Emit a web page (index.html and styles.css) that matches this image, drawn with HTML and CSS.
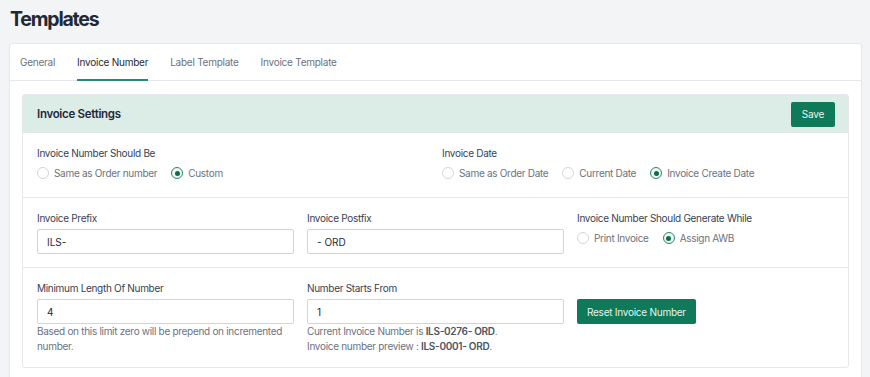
FILE: index.html
```html
<!DOCTYPE html>
<html>
<head>
<meta charset="utf-8">
<link rel="stylesheet" href="styles.css">
</head>
<body>
<h1 class="page-title">Templates</h1>
<div class="outer-card">
  <nav class="tabs">
    <span class="tab">General</span>
    <span class="tab active">Invoice Number</span>
    <span class="tab">Label Template</span>
    <span class="tab">Invoice Template</span>
  </nav>
  <div class="tab-body">
    <div class="settings-card">
      <div class="settings-header">
        <span class="settings-title">Invoice Settings</span>
        <button class="btn btn-save">Save</button>
      </div>
      <div class="row two">
        <div class="field">
          <div class="label">Invoice Number Should Be</div>
          <div class="radios">
            <span class="radio"><span class="dot"></span>Same as Order number</span>
            <span class="radio checked"><span class="dot"></span>Custom</span>
          </div>
        </div>
        <div class="field">
          <div class="label">Invoice Date</div>
          <div class="radios">
            <span class="radio"><span class="dot"></span>Same as Order Date</span>
            <span class="radio"><span class="dot"></span>Current Date</span>
            <span class="radio checked"><span class="dot"></span>Invoice Create Date</span>
          </div>
        </div>
      </div>
      <div class="row three">
        <div class="field">
          <div class="label">Invoice Prefix</div>
          <div class="input">ILS-</div>
        </div>
        <div class="field">
          <div class="label">Invoice Postfix</div>
          <div class="input">- ORD</div>
        </div>
        <div class="field">
          <div class="label">Invoice Number Should Generate While</div>
          <div class="radios">
            <span class="radio"><span class="dot"></span>Print Invoice</span>
            <span class="radio checked"><span class="dot"></span>Assign AWB</span>
          </div>
        </div>
      </div>
      <div class="row three last">
        <div class="field">
          <div class="label">Minimum Length Of Number</div>
          <div class="input">4</div>
          <div class="help">Based on this limit zero will be prepend on incremented number.</div>
        </div>
        <div class="field">
          <div class="label">Number Starts From</div>
          <div class="input">1</div>
          <div class="help">Current Invoice Number is <b>ILS-0276- ORD</b>.<br>Invoice number preview : <b>ILS-0001- ORD</b>.</div>
        </div>
        <div class="field">
          <div class="label">&nbsp;</div>
          <div class="btn-wrap"><button class="btn btn-reset">Reset Invoice Number</button></div>
        </div>
      </div>
    </div>
  </div>
</div>
</body>
</html>
```
FILE: styles.css
```css
* { box-sizing: border-box; }
html, body { margin: 0; padding: 0; }
body {
  background: #f3f4f6;
  font-family: Inter, "Noto Sans", sans-serif;
  color: #374151;
  padding: 0 8px 0 9px;
  overflow: hidden;
  height: 377px;
}
.page-title {
  margin: 0;
  padding: 7px 0 0 1px;
  height: 43px;
  font-size: 19.5px;
  font-weight: 700;
  color: #1f2937;
  letter-spacing: -1.2px;
}
.outer-card {
  background: #fff;
  border: 1px solid #e5e7eb;
  border-radius: 3px;
  height: 400px;
}
.tabs {
  display: flex;
  gap: 22px;
  padding: 0 10px;
  height: 37px;
  border-bottom: 1px solid #e5e7eb;
}
.tab {
  display: flex;
  align-items: center;
  font-size: 10px;
  letter-spacing: -0.25px;
  color: #6b7280;
  border-bottom: 2px solid transparent;
  padding-top: 1px;
  margin-bottom: -1px;
}
.tab.active {
  color: #1f2937;
  border-bottom-color: #27896d;
}
.tab-body {
  padding: 13px 12px 0 12px;
}
.settings-card {
  border: 1px solid #e5e7eb;
  border-radius: 3px;
  background: #fff;
}
.settings-header {
  display: flex;
  justify-content: space-between;
  align-items: center;
  background: #dcede8;
  height: 38px;
  padding: 0 13px 0 14px;
}
.settings-title {
  font-size: 11.5px;
  font-weight: 600;
  letter-spacing: -0.3px;
  color: #1f2937;
}
.btn {
  font-family: inherit;
  background: #0e7a5a;
  color: #e6f4ef;
  border: none;
  border-radius: 2px;
  font-size: 10px;
  letter-spacing: -0.25px;
  height: 25px;
  padding: 0 10px;
}
.btn-save { padding: 0 11px; }
.btn-wrap { margin-top: 3px; }
.row {
  display: grid;
  gap: 13px;
  padding: 13px 14px 0 14px;
  border-bottom: 1px solid #e5e7eb;
}
.row.two { grid-template-columns: 1fr 1fr; height: 65px; }
.row.three { grid-template-columns: 1fr 1fr 1fr; height: 70px; }
.row.last { border-bottom: none; height: 99px; }
.label {
  font-size: 10px;
  letter-spacing: -0.3px;
  color: #374151;
  height: 15px;
  line-height: 15px;
}
.radios {
  display: flex;
  gap: 14px;
  margin-top: 4px;
  height: 16px;
  align-items: center;
}
.radio {
  display: flex;
  align-items: center;
  font-size: 10px;
  letter-spacing: -0.3px;
  color: #6b7280;
}
.dot {
  width: 12px;
  height: 12px;
  border-radius: 50%;
  border: 1px solid #d1d5db;
  margin-right: 5px;
  background: #fff;
  position: relative;
}
.radio.checked .dot {
  border-color: #27896d;
  background: #eef7f4;
}
.radio.checked .dot::after {
  content: "";
  position: absolute;
  left: 2.5px;
  top: 2.5px;
  width: 5px;
  height: 5px;
  border-radius: 50%;
  background: #0e6b50;
}
.input {
  margin-top: 3px;
  height: 25px;
  border: 1px solid #d1d5db;
  border-radius: 2px;
  font-size: 10px;
  color: #1f2937;
  padding: 0 9px;
  display: flex;
  align-items: center;
}
.help {
  font-size: 10px;
  letter-spacing: -0.3px;
  color: #6b7280;
  line-height: 15px;
}
.help b { color: #4b5563; font-weight: 600; }
```
